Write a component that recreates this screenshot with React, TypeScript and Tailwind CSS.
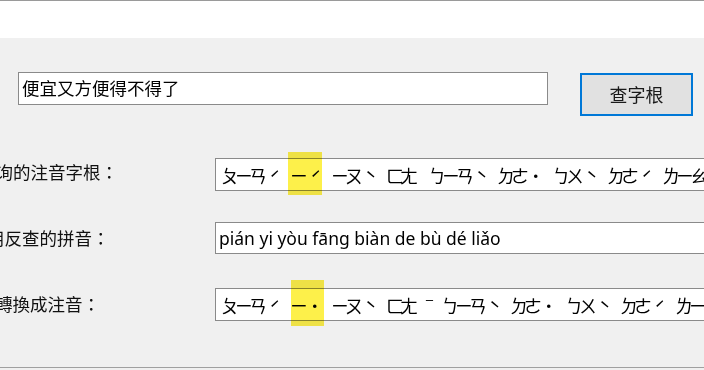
import React from "react";

type Syllable = [string, string];

const cjk = { fontFamily: '"Noto Sans CJK TC", "Noto Sans CJK SC", sans-serif' };

const lookedUp: Syllable[] = [
  ["ㄆㄧㄢ", "ˊ"],
  ["ㄧ", "ˊ"],
  ["ㄧㄡ", "ˋ"],
  ["ㄈㄤ", ""],
  ["ㄅㄧㄢ", "ˋ"],
  ["ㄉㄜ", "˙"],
  ["ㄅㄨ", "ˋ"],
  ["ㄉㄜ", "ˊ"],
  ["ㄌㄧㄠ", "ˇ"],
];

const converted: Syllable[] = [
  ["ㄆㄧㄢ", "ˊ"],
  ["ㄧ", "˙"],
  ["ㄧㄡ", "ˋ"],
  ["ㄈㄤ", "ˉ"],
  ["ㄅㄧㄢ", "ˋ"],
  ["ㄉㄜ", "˙"],
  ["ㄅㄨ", "ˋ"],
  ["ㄉㄜ", "ˊ"],
  ["ㄌㄧㄠ", "ˇ"],
];

// tone marks sit lower in the reference font, except the light tone bar
const toneShift: Record<string, string> = {
  "ˊ": "translate-y-[4px]",
  "ˋ": "translate-y-[4px]",
  "ˇ": "translate-y-[4px]",
  "˙": "translate-y-[1px]",
  "ˉ": "translate-y-[1px]",
};

function Zhuyin({ items }: { items: Syllable[] }) {
  return (
    <span className="whitespace-nowrap leading-none">
      {items.map(([sounds, tone], i) => (
        <span key={i}>
          {sounds.split("").map((ch, j) => (
            <span key={j} className="inline-block w-[14px] text-center text-[18px]">
              {ch}
            </span>
          ))}
          {tone ? (
            <span className={`inline-block w-[27px] pl-[6px] text-left text-[19px] ${toneShift[tone]}`}>{tone}</span>
          ) : (
            <span className="inline-block w-[14px]" />
          )}
        </span>
      ))}
    </span>
  );
}

function Label({ text, shift }: { text: string; shift: string }) {
  return (
    <div className={`w-[215px] shrink-0 text-[17.5px] text-[#111] whitespace-nowrap ${shift}`} style={cjk}>
      {text}
    </div>
  );
}

export default function App() {
  return (
    <div className="w-[704px] h-[370px] overflow-hidden bg-[#f0f0f0] flex flex-col">
      {/* title strip */}
      <div className="h-[38px] shrink-0 bg-white border-t border-[#9a9a9a]" />

      <div className="relative flex-1 flex flex-col">
        {/* search row */}
        <div className="flex items-start pt-[34px] pl-[18px]">
          <div
            className="w-[530px] h-[33px] bg-white border border-[#8a8a8a] pl-[3px] flex items-center text-[17.5px] text-black"
            style={cjk}
          >
            便宜又方便得不得了
          </div>
          <button
            className="ml-[32px] mt-[1px] w-[113px] h-[43px] bg-[#e1e1e1] border-2 border-[#0078d7] text-[18px] text-[#1a1a1a]"
            style={cjk}
          >
            查字根
          </button>
        </div>

        {/* zhuyin looked up */}
        <div className="flex items-center mt-[42px]">
          <Label text="查询的注音字根：" shift="-ml-[22px] mt-[-4px]" />
          <div className="relative ml-[22px] w-[520px] h-[33px] shrink-0 bg-white border border-[#8a8a8a] pl-[5px] flex items-center text-black" style={cjk}>
            <Zhuyin items={lookedUp} />
          </div>
        </div>

        {/* pinyin */}
        <div className="flex items-center mt-[31px]">
          <Label text="用反查的拼音：" shift="-ml-[13px]" />
          <div
            className="ml-[13px] w-[520px] h-[32px] shrink-0 bg-white border border-[#8a8a8a] pl-[3px] flex items-center text-[17.5px] text-black whitespace-nowrap"
            style={{ fontFamily: '"Noto Sans", "Open Sans", sans-serif' }}
          >
            pián yi yòu fāng biàn de bù dé liǎo
          </div>
        </div>

        {/* converted */}
        <div className="flex items-center mt-[34px]">
          <Label text="轉換成注音：" shift="-ml-[5px]" />
          <div className="ml-[5px] w-[520px] h-[33px] shrink-0 bg-white border border-[#8a8a8a] pl-[5px] flex items-center text-black" style={cjk}>
            <Zhuyin items={converted} />
          </div>
        </div>

        {/* highlight marks laid over the fields */}
        <div className="absolute left-[288px] top-[114px] w-[34px] h-[43px] bg-[#fdf04a] mix-blend-multiply" />
        <div className="absolute left-[291px] top-[242px] w-[33px] h-[46px] bg-[#fdf04a] mix-blend-multiply" />

        <div className="mt-auto h-[3px] border-t border-[#a0a0a0]" />
      </div>
    </div>
  );
}
